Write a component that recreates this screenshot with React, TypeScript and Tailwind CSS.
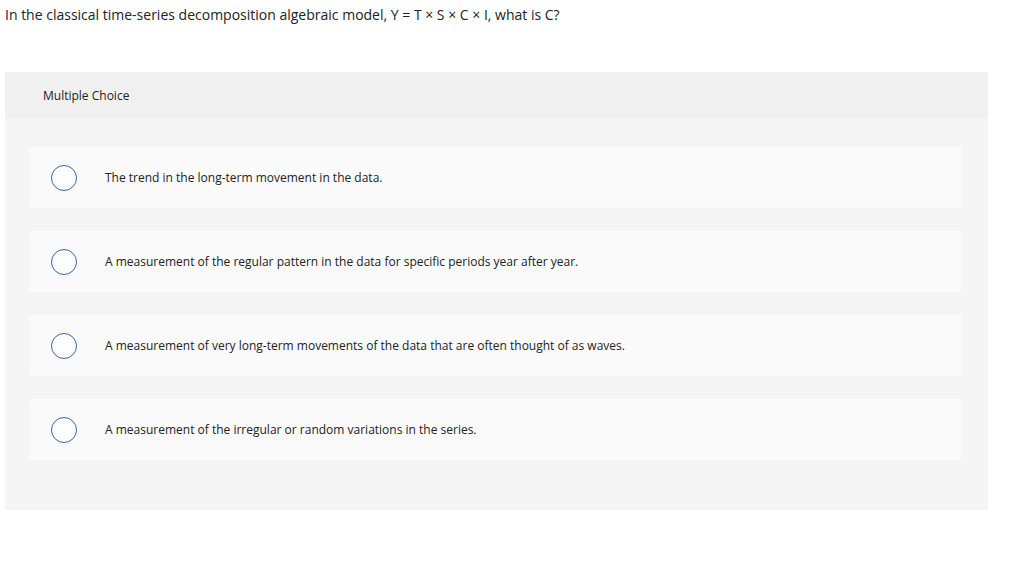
import React from "react";

const options = [
  "The trend in the long-term movement in the data.",
  "A measurement of the regular pattern in the data for specific periods year after year.",
  "A measurement of very long-term movements of the data that are often thought of as waves.",
  "A measurement of the irregular or random variations in the series.",
];

function App() {
  return (
    <div
      className="min-h-[563px] bg-white text-[#222]"
      style={{ fontFamily: "'Open Sans', sans-serif" }}
    >
      <div className="px-[5px] pt-[6px] text-[14px] leading-[18px]">
        In the classical time-series decomposition algebraic model, Y = T × S × C × I, what is C?
      </div>
      <div className="ml-[5px] mt-[48px] w-[983px] rounded-[2px] bg-[#f5f5f5] pb-[50px]">
        <div className="flex h-[46px] items-center bg-[#f0f0f0] px-[38px] pt-[2px] text-[12px]">
          Multiple Choice
        </div>
        <div className="flex flex-col gap-[23px] pl-[24px] pr-[26px] pt-[29px]">
          {options.map((o) => (
            <div
              key={o}
              className="flex h-[61px] items-center rounded-[3px] bg-[#fafafa] pl-[22px]"
            >
              <div className="h-[26px] w-[26px] shrink-0 rounded-full border-[1.5px] border-[#3a64a0] bg-white" />
              <div className="ml-[28px] pt-[1px] text-[12px]">{o}</div>
            </div>
          ))}
        </div>
      </div>
    </div>
  );
}

export default App;
